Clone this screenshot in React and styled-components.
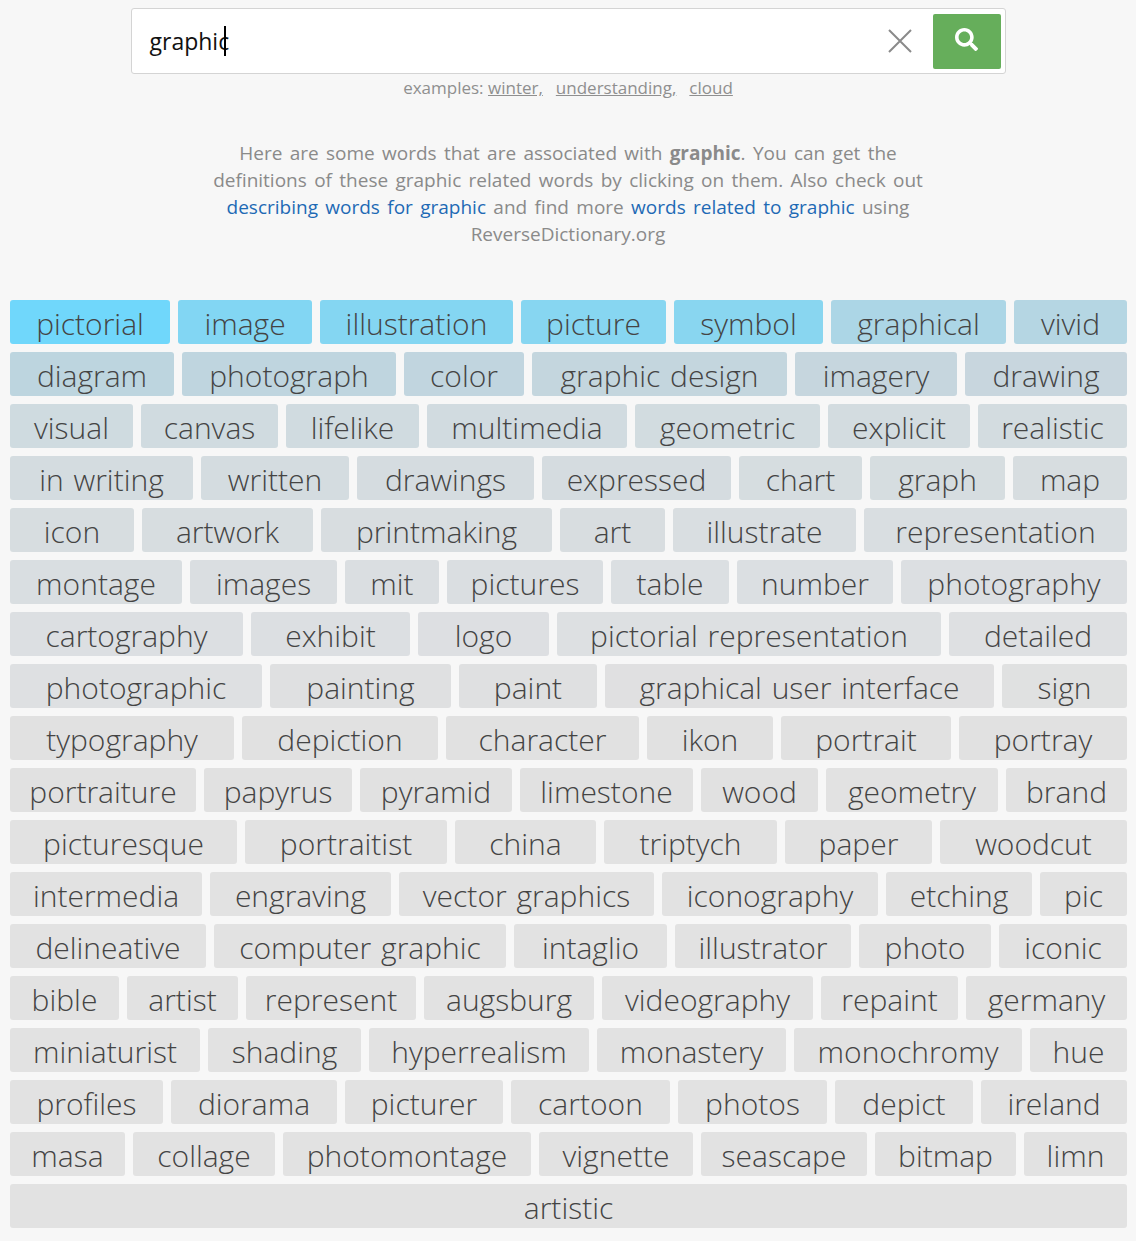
import React from 'react';
import styled, { createGlobalStyle } from 'styled-components';
import { FaSearch } from 'react-icons/fa';

const GlobalStyle = createGlobalStyle`
  html, body { margin: 0; padding: 0; background: #f7f7f7; }
  body { font-family: "Open Sans", "Noto Sans", sans-serif; }
  * { box-sizing: border-box; }
`;

const rows = [
  [['pictorial', 160], ['image', 134], ['illustration', 193], ['picture', 145], ['symbol', 149], ['graphical', 175], ['vivid', 113]],
  [['diagram', 164], ['photograph', 214], ['color', 120], ['graphic design', 255], ['imagery', 162], ['drawing', 162]],
  [['visual', 123], ['canvas', 137], ['lifelike', 133], ['multimedia', 200], ['geometric', 185], ['explicit', 142], ['realistic', 149]],
  [['in writing', 183], ['written', 148], ['drawings', 177], ['expressed', 189], ['chart', 123], ['graph', 135], ['map', 114]],
  [['icon', 124], ['artwork', 171], ['printmaking', 231], ['art', 105], ['illustrate', 183], ['representation', 263]],
  [['montage', 172], ['images', 147], ['mit', 94], ['pictures', 156], ['table', 118], ['number', 156], ['photography', 226]],
  [['cartography', 233], ['exhibit', 159], ['logo', 131], ['pictorial representation', 384], ['detailed', 178]],
  [['photographic', 252], ['painting', 181], ['paint', 138], ['graphical user interface', 389], ['sign', 125]],
  [['typography', 224], ['depiction', 196], ['character', 193], ['ikon', 126], ['portrait', 170], ['portray', 168]],
  [['portraiture', 186], ['papyrus', 148], ['pyramid', 152], ['limestone', 173], ['wood', 117], ['geometry', 172], ['brand', 121]],
  [['picturesque', 227], ['portraitist', 202], ['china', 141], ['triptych', 173], ['paper', 147], ['woodcut', 187]],
  [['intermedia', 192], ['engraving', 181], ['vector graphics', 255], ['iconography', 216], ['etching', 146], ['pic', 87]],
  [['delineative', 196], ['computer graphic', 292], ['intaglio', 153], ['illustrator', 176], ['photo', 132], ['iconic', 128]],
  [['bible', 109], ['artist', 111], ['represent', 170], ['augsburg', 170], ['videography', 211], ['repaint', 137], ['germany', 161]],
  [['miniaturist', 190], ['shading', 153], ['hyperrealism', 220], ['monastery', 189], ['monochromy', 228], ['hue', 97]],
  [['profiles', 153], ['diorama', 166], ['picturer', 158], ['cartoon', 159], ['photos', 149], ['depict', 138], ['ireland', 146]],
  [['masa', 115], ['collage', 142], ['photomontage', 248], ['vignette', 154], ['seascape', 166], ['bitmap', 141], ['limn', 103]],
  [['artistic', 1117]],
];

// tag colour by rank: [rank, r, g, b], sky blue fading down to plain grey
const colorStops = [
  [0, 112, 215, 251],
  [1, 130, 214, 243],
  [4, 137, 214, 240],
  [5, 172, 214, 230],
  [7, 189, 213, 223],
  [12, 200, 214, 222],
  [13, 207, 219, 224],
  [20, 212, 220, 224],
  [27, 215, 221, 224],
  [40, 220, 223, 226],
  [51, 225, 225, 225],
  [70, 226, 226, 226],
];

const tagColor = (rank) => {
  const next = colorStops.findIndex((s) => s[0] >= rank);
  if (next <= 0) {
    const s = next === 0 ? colorStops[0] : colorStops[colorStops.length - 1];
    return `rgb(${s[1]}, ${s[2]}, ${s[3]})`;
  }
  const a = colorStops[next - 1];
  const b = colorStops[next];
  const t = (rank - a[0]) / (b[0] - a[0]);
  const mix = (i) => Math.round(a[i] + (b[i] - a[i]) * t);
  return `rgb(${mix(1)}, ${mix(2)}, ${mix(3)})`;
};

const App = () => {
  let rank = 0;
  return (
    <>
      <GlobalStyle />
      <Page>
        <SearchBox>
          <SearchText>graphic<Caret /></SearchText>
          <ClearIcon viewBox="0 0 24 24">
            <path d="M1 1 L23 23 M23 1 L1 23" />
          </ClearIcon>
          <SearchButton><FaSearch size={23} color="#fff" /></SearchButton>
        </SearchBox>
        <Examples>
          examples: <ExampleLink>winter,</ExampleLink>
          <ExampleLink $gap>understanding,</ExampleLink>
          <ExampleLink $gap>cloud</ExampleLink>
        </Examples>
        <Intro>
          Here are some words that are associated with <b>graphic</b>. You can get the<br />
          definitions of these graphic related words by clicking on them. Also check out<br />
          <IntroLink>describing words for graphic</IntroLink> and find more <IntroLink>words related to graphic</IntroLink> using<br />
          ReverseDictionary.org
        </Intro>
        <TagList>
          {rows.map((row) => (
            <TagRow key={row[0][0]}>
              {row.map(([word, width]) => (
                <Tag key={word} $width={width} style={{ background: tagColor(rank++) }}>{word}</Tag>
              ))}
            </TagRow>
          ))}
        </TagList>
      </Page>
    </>
  );
};

const Page = styled.div`
  display: flex;
  flex-direction: column;
  align-items: center;
  width: 1136px;
  padding-top: 8px;
`;

const SearchBox = styled.div`
  display: flex;
  align-items: center;
  width: 875px;
  height: 66px;
  padding: 0 4px 0 18px;
  background: #fff;
  border: 1px solid #d4d4d4;
  border-radius: 3px;
`;

const SearchText = styled.div`
  flex: 1;
  font-size: 23px;
  color: #111;
  display: flex;
  align-items: center;
`;

const Caret = styled.span`
  display: inline-block;
  width: 2px;
  height: 30px;
  margin-left: -5px;
  background: #000;
`;

const ClearIcon = styled.svg`
  width: 24px;
  height: 24px;
  margin-right: 21px;
  fill: none;
  stroke: #8a8a8a;
  stroke-width: 2;
`;

const SearchButton = styled.div`
  display: flex;
  align-items: center;
  justify-content: center;
  width: 68px;
  height: 55px;
  padding-bottom: 3px;
  background: #66ae5b;
  border-radius: 2px;
`;

const Examples = styled.div`
  margin-top: 2px;
  font-size: 17px;
  line-height: 24px;
  color: #8f8f8f;
`;

const ExampleLink = styled.span`
  text-decoration: underline;
  margin-left: ${(p) => (p.$gap ? '13px' : '0')};
`;

const Intro = styled.p`
  margin: 40px 0 0;
  font-size: 19px;
  word-spacing: 2.4px;
  line-height: 27px;
  text-align: center;
  color: #8a8a8a;
`;

const IntroLink = styled.span`
  color: #1e6ab5;
`;

const TagList = styled.div`
  display: flex;
  flex-direction: column;
  gap: 8px;
  width: 100%;
  margin-top: 52px;
  padding: 0 9px 0 10px;
`;

const TagRow = styled.div`
  display: flex;
  gap: 8px;
`;

const Tag = styled.div`
  flex: ${(p) => p.$width} 1 0;
  height: 44px;
  line-height: 48px;
  border-radius: 3px;
  font-size: 30px;
  font-weight: 300;
  word-spacing: 2px;
  text-align: center;
  white-space: nowrap;
  color: #444;
`;

export default App;
